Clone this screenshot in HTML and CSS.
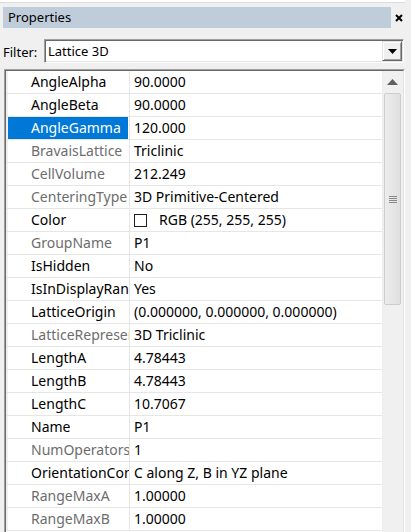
FILE: index.html
```html
<!DOCTYPE html>
<html>
<head>
<meta charset="utf-8">
<link rel="stylesheet" href="styles.css">
</head>
<body>
<div class="panel">
  <div class="topstrip"></div>
  <div class="titlerow">
    <div class="titlebar">Properties</div>
    <div class="close">
      <svg width="8" height="8" viewBox="0 0 8 8"><path d="M1 1L7 7M7 1L1 7" stroke="#000" stroke-width="2"/></svg>
    </div>
  </div>
  <div class="filterrow">
    <span class="flabel">Filter:</span>
    <div class="combo">
      <span class="ctext">Lattice 3D</span>
      <div class="dropbtn"><svg width="9" height="5" viewBox="0 0 9 5"><path d="M0 0H9L4.5 5Z" fill="#000"/></svg></div>
    </div>
  </div>
  <div class="grid">
    <div class="inner">
      <div class="rows">
        <div class="row"><div class="gut"></div><div class="name">AngleAlpha</div><div class="val">90.0000</div></div>
        <div class="row"><div class="gut"></div><div class="name">AngleBeta</div><div class="val">90.0000</div></div>
        <div class="row"><div class="gut"></div><div class="name sel">AngleGamma</div><div class="val">120.000</div></div>
        <div class="row"><div class="gut"></div><div class="name ro">BravaisLattice</div><div class="val">Triclinic</div></div>
        <div class="row"><div class="gut"></div><div class="name ro">CellVolume</div><div class="val">212.249</div></div>
        <div class="row"><div class="gut"></div><div class="name ro">CenteringType</div><div class="val">3D Primitive-Centered</div></div>
        <div class="row"><div class="gut"></div><div class="name">Color</div><div class="val"><span class="swatch"></span>RGB (255, 255, 255)</div></div>
        <div class="row"><div class="gut"></div><div class="name ro">GroupName</div><div class="val">P1</div></div>
        <div class="row"><div class="gut"></div><div class="name">IsHidden</div><div class="val">No</div></div>
        <div class="row"><div class="gut"></div><div class="name">IsInDisplayRange</div><div class="val">Yes</div></div>
        <div class="row"><div class="gut"></div><div class="name">LatticeOrigin</div><div class="val">(0.000000, 0.000000, 0.000000)</div></div>
        <div class="row"><div class="gut"></div><div class="name ro">LatticeRepresentation</div><div class="val">3D Triclinic</div></div>
        <div class="row"><div class="gut"></div><div class="name">LengthA</div><div class="val">4.78443</div></div>
        <div class="row"><div class="gut"></div><div class="name">LengthB</div><div class="val">4.78443</div></div>
        <div class="row"><div class="gut"></div><div class="name">LengthC</div><div class="val">10.7067</div></div>
        <div class="row"><div class="gut"></div><div class="name">Name</div><div class="val">P1</div></div>
        <div class="row"><div class="gut"></div><div class="name ro">NumOperators</div><div class="val">1</div></div>
        <div class="row"><div class="gut"></div><div class="name">OrientationConvention</div><div class="val">C along Z, B in YZ plane</div></div>
        <div class="row"><div class="gut"></div><div class="name ro">RangeMaxA</div><div class="val">1.00000</div></div>
        <div class="row"><div class="gut"></div><div class="name ro">RangeMaxB</div><div class="val">1.00000</div></div>
      </div>
      <div class="scrollbar">
        <div class="arrow"><svg width="11" height="6" viewBox="0 0 11 6"><path d="M0 6L5.5 0L11 6Z" fill="#606060"/></svg></div>
        <div class="thumb"><div class="grip"><i></i><i></i><i></i><i></i></div></div>
        <div class="track"></div>
        <div class="arrow down"><svg width="11" height="6" viewBox="0 0 11 6"><path d="M0 0H11L5.5 6Z" fill="#606060"/></svg></div>
      </div>
    </div>
  </div>
</div>
</body>
</html>
```
FILE: styles.css
```css
html, body {
  margin: 0;
  padding: 0;
  background: #f0f0f0;
  height: 532px;
  overflow: hidden;
}
.panel {
  font-family: "Noto Sans", "Open Sans", sans-serif;
  color: #000;
  width: 411px;
}
.topstrip {
  height: 2px;
  width: 405px;
  background: #fff;
  border-bottom: 1px solid #dcdcdc;
}
.titlerow {
  display: flex;
  margin-top: 4px;
  height: 21px;
}
.titlebar {
  margin-left: 3px;
  width: 388px;
  background: #bfcddb;
  font-size: 13px;
  line-height: 21px;
  padding-left: 5px;
  box-sizing: border-box;
  color: #000;
}
.close {
  flex: 1;
  display: flex;
  align-items: center;
  justify-content: center;
  padding-right: 4px;
}
.close svg { display: block; }
.filterrow {
  display: flex;
  align-items: center;
  margin-top: 11px;
  height: 24px;
}
.flabel {
  font-size: 13px;
  margin-left: 3px;
  width: 41px;
  padding-top: 2px;
}
.combo {
  width: 360px;
  height: 24px;
  box-sizing: border-box;
  background: #fff;
  border-top: 1px solid #a0a0a0;
  border-left: 1px solid #a0a0a0;
  border-right: 1px solid #fff;
  border-bottom: 1px solid #fff;
  box-shadow: inset 1px 1px 0 #696969, inset -1px -1px 0 #e3e3e3;
  display: flex;
  align-items: center;
  justify-content: space-between;
}
.ctext {
  font-size: 13px;
  padding-left: 3px;
}
.dropbtn {
  width: 20px;
  height: 20px;
  margin-right: 1px;
  box-sizing: border-box;
  background: #f0f0f0;
  border-top: 1px solid #e3e3e3;
  border-left: 1px solid #e3e3e3;
  border-right: 1px solid #696969;
  border-bottom: 1px solid #696969;
  box-shadow: inset 1px 1px 0 #fff, inset -1px -1px 0 #a0a0a0;
  display: flex;
  align-items: center;
  justify-content: center;
}
.dropbtn svg { display: block; margin-top: 1px; }
.grid {
  margin-top: 6px;
  margin-left: 4px;
  width: 401px;
  height: 480px;
  box-sizing: border-box;
  border-top: 1px solid #a0a0a0;
  border-left: 1px solid #a0a0a0;
  border-right: 1px solid #fff;
}
.inner {
  display: flex;
  height: 100%;
  box-sizing: border-box;
  border-top: 1px solid #696969;
  border-left: 1px solid #696969;
  border-right: 1px solid #e3e3e3;
}
.rows {
  flex: 1;
  background: #fff;
  font-size: 14px;
}
.row {
  display: flex;
  height: 22px;
  border-bottom: 1px solid #e6e6e6;
  line-height: 22px;
  white-space: nowrap;
}
.gut {
  width: 2px;
  background: #f0f0f0;
}
.name {
  width: 122px;
  padding-left: 23px;
  box-sizing: border-box;
  overflow: hidden;
  border-right: 1px solid #e6e6e6;
}
.name.ro { color: #6d6d6d; }
.name.sel {
  background: #0078d7;
  color: #fff;
  box-shadow: inset -1px 0 0 #fff;
}
.val {
  flex: 1;
  padding-left: 4px;
  overflow: hidden;
  display: flex;
  align-items: center;
}
.swatch {
  display: inline-block;
  width: 11px;
  height: 11px;
  border: 1px solid #1e1e1e;
  margin-right: 12px;
  margin-top: 1px;
}
.scrollbar {
  width: 21px;
  background: #f0f0f0;
  display: flex;
  flex-direction: column;
  align-items: center;
}
.arrow {
  height: 22px;
  width: 100%;
  display: flex;
  align-items: center;
  justify-content: center;
}
.arrow svg { display: block; }
.thumb {
  width: 17px;
  height: 212px;
  box-sizing: border-box;
  border: 1px solid #cdcdcd;
  border-radius: 2px;
  background: linear-gradient(to right, #ececec, #e0e0e0);
  display: flex;
  align-items: center;
  justify-content: center;
}
.grip {
  display: flex;
  flex-direction: column;
  gap: 1px;
}
.grip i {
  display: block;
  width: 8px;
  height: 1px;
  background: #8a8a8a;
}
.track { flex: 1; }
.down { height: 20px; }
```
